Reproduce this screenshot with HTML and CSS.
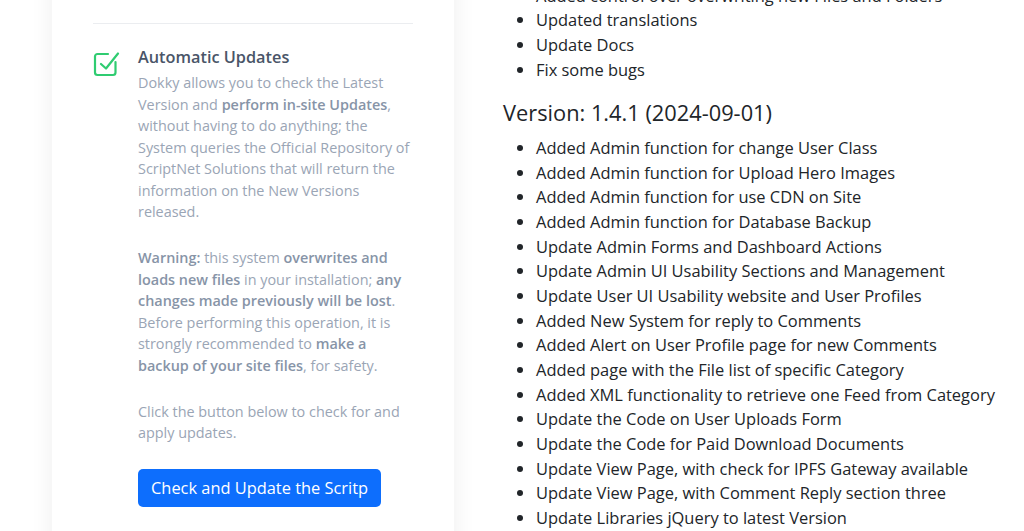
FILE: index.html
```html
<!DOCTYPE html>
<html>
<head>
<title>Dokky - Updates</title>
<link rel="stylesheet" href="styles.css">
</head>

<body>
<div class="page">

  <div class="update-card">
    <hr class="card-line">
    <div class="feature">
      <div class="feature-icon">
        <svg width="28" height="26" viewBox="0 0 28 26" fill="none" stroke="#2fcc71" stroke-width="2.2" stroke-linecap="round" stroke-linejoin="round">
          <path d="M22.5 10v10.5a2.5 2.5 0 0 1 -2.5 2.5h-15.5a2.5 2.5 0 0 1 -2.5 -2.5v-16a2.5 2.5 0 0 1 2.5 -2.5h10.5"/>
          <path d="M8 12l5 4.5l12 -15"/>
        </svg>
      </div>
      <div class="feature-body">
        <p class="feature-title">Automatic Updates</p>
        <p class="feature-text">
          Dokky allows you to check the Latest Version and <b>perform in-site Updates</b>, without having to do anything; the System queries the Official Repository of ScriptNet Solutions that will return the information on the New Versions released.
        </p>
        <p class="feature-text">
          <b>Warning:</b> this system <b>overwrites and loads new files</b> in your installation; <b>any changes made previously will be lost</b>. Before performing this operation, it is strongly recommended to <b>make a backup of your site files</b>, for safety.
        </p>
        <p class="feature-text">
          Click the button below to check for and apply updates.
        </p>
        <button class="update-button">Check and Update the Scritp</button>
      </div>
    </div>
  </div>

  <div class="changelog">
    <ul class="change-list">
      <li>Added control over overwriting new Files and Folders</li>
      <li>Updated translations</li>
      <li>Update Docs</li>
      <li>Fix some bugs</li>
    </ul>
    <h4 class="version">Version: 1.4.1 (2024-09-01)</h4>
    <ul class="change-list">
      <li>Added Admin function for change User Class</li>
      <li>Added Admin function for Upload Hero Images</li>
      <li>Added Admin function for use CDN on Site</li>
      <li>Added Admin function for Database Backup</li>
      <li>Update Admin Forms and Dashboard Actions</li>
      <li>Update Admin UI Usability Sections and Management</li>
      <li>Update User UI Usability website and User Profiles</li>
      <li>Added New System for reply to Comments</li>
      <li>Added Alert on User Profile page for new Comments</li>
      <li>Added page with the File list of specific Category</li>
      <li>Added XML functionality to retrieve one Feed from Category</li>
      <li>Update the Code on User Uploads Form</li>
      <li>Update the Code for Paid Download Documents</li>
      <li>Update View Page, with check for IPFS Gateway available</li>
      <li>Update View Page, with Comment Reply section three</li>
      <li>Update Libraries jQuery to latest Version</li>
    </ul>
  </div>

</div>
</body>
</html>
```

FILE: styles.css
```css
body{
  margin: 0;
  font-family: "Open Sans", "Liberation Sans", sans-serif;
  background-color: #ffffff;
  color: #212529;
  overflow: hidden;
}
.page{
  display: flex;
  align-items: flex-start;
  gap: 49px;
  padding-left: 52px;
  margin-top: -30px;
}
.update-card{
  width: 402px;
  box-sizing: border-box;
  padding: 53px 41px 60px 41px;
  background-color: #ffffff;
  box-shadow: 0 0 22px rgba(0, 0, 0, 0.07);
  min-height: 700px;
}
.card-line{
  border: 0;
  border-top: 1px solid #ebedf0;
  margin: 0 0 22px 0;
}
.feature{
  display: flex;
  gap: 17px;
}
.feature-icon{
  width: 28px;
  flex-shrink: 0;
  padding-top: 6px;
}
.feature-body{
  margin-right: -6px;
}
.feature-title{
  margin: 0 0 4px 0;
  font-size: 16.3px;
  line-height: 22px;
  font-weight: 600;
  color: #4a5568;
}
.feature-text{
  margin: 0 0 24.5px 0;
  font-size: 14.4px;
  line-height: 21.5px;
  color: #9aa5b5;
}
.feature-text b{
  font-weight: 600;
  color: #8794a7;
}
.update-button{
  margin-top: 1px;
  padding: 7px 13px;
  font-family: "Open Sans", "Liberation Sans", sans-serif;
  font-size: 16.4px;
  line-height: 24px;
  color: #ffffff;
  background-color: #0d6efd;
  border: 0;
  border-radius: 5px;
  cursor: pointer;
}
.changelog{
  padding-top: 13.8px;
}
.change-list{
  margin: 0 0 16px 0;
  padding-left: 33px;
  font-size: 16.45px;
  line-height: 24.67px;
}
.version{
  margin: 0 0 7.5px 0;
  font-size: 21.8px;
  line-height: 30px;
  font-weight: 400;
}
```
